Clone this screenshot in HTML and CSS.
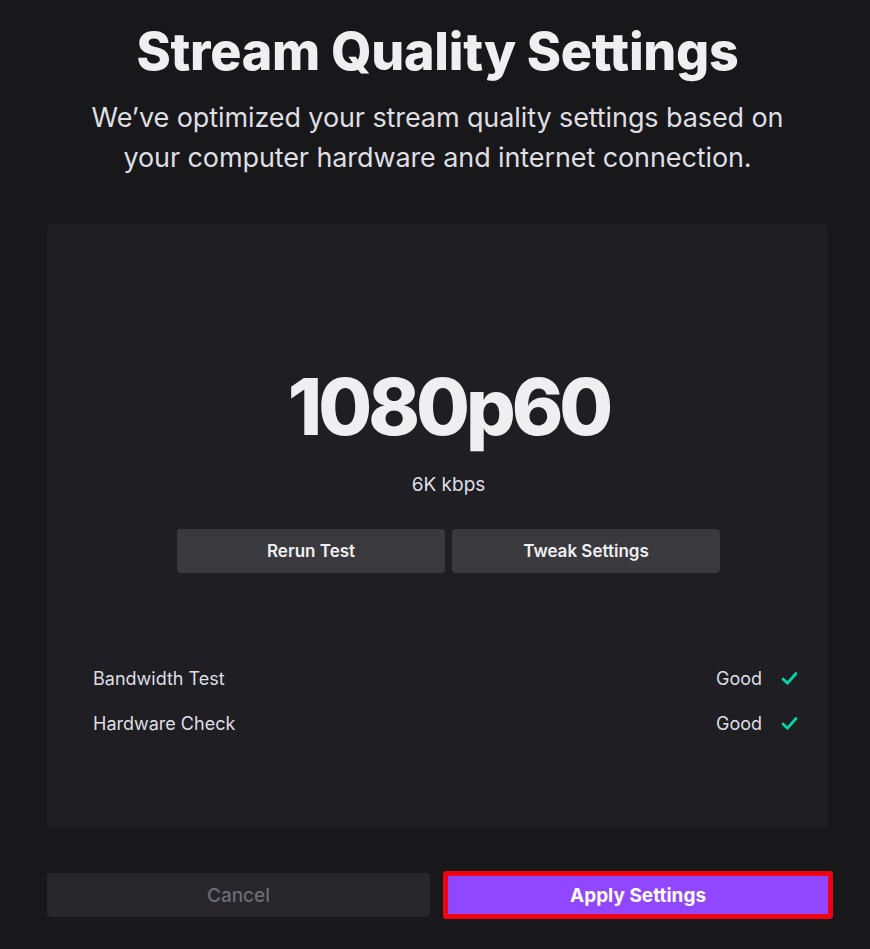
FILE: index.html
```html
<!DOCTYPE html>
<html lang="en">
<head>
<meta charset="utf-8">
<title>Stream Quality Settings</title>
<link rel="stylesheet" href="styles.css">
</head>
<body>
<main class="page">
  <header class="intro">
    <h1 class="title">Stream Quality Settings</h1>
    <p class="subtitle">We’ve optimized your stream quality settings based on your computer hardware and internet connection.</p>
  </header>
  <section class="card">
    <div class="result">
      <div class="resolution">1080p60</div>
      <div class="bitrate">6K kbps</div>
      <div class="actions">
        <button class="btn btn-secondary">Rerun Test</button>
        <button class="btn btn-secondary">Tweak Settings</button>
      </div>
    </div>
    <ul class="checks">
      <li class="check-row">
        <span class="check-label">Bandwidth Test</span>
        <span class="check-status">Good
          <svg class="check-icon" viewBox="0 0 17 15" width="17" height="15" aria-hidden="true"><path d="M2 8 L6.5 12.2 L15 2.5" fill="none" stroke="#00d5a9" stroke-width="2.8" stroke-linecap="round" stroke-linejoin="round"/></svg>
        </span>
      </li>
      <li class="check-row">
        <span class="check-label">Hardware Check</span>
        <span class="check-status">Good
          <svg class="check-icon" viewBox="0 0 17 15" width="17" height="15" aria-hidden="true"><path d="M2 8 L6.5 12.2 L15 2.5" fill="none" stroke="#00d5a9" stroke-width="2.8" stroke-linecap="round" stroke-linejoin="round"/></svg>
        </span>
      </li>
    </ul>
  </section>
  <footer class="footer">
    <button class="btn btn-cancel">Cancel</button>
    <div class="highlight">
      <button class="btn btn-primary">Apply Settings</button>
    </div>
  </footer>
</main>
</body>
</html>
```

FILE: styles.css
```css
* { box-sizing: border-box; }
html, body {
  margin: 0;
  padding: 0;
  background: #18181b;
  color: #efeff1;
  font-family: Inter, "Noto Sans", "Liberation Sans", sans-serif;
}
.page {
  width: 870px;
  height: 949px;
  padding: 22px 42px 0 47px;
  display: flex;
  flex-direction: column;
}
.intro {
  text-align: center;
}
.title {
  margin: 0;
  font-size: 52px;
  font-weight: 800;
  line-height: 60px;
  letter-spacing: -0.3px;
  color: #efeff1;
}
.subtitle {
  margin: 16px auto 0;
  width: 720px;
  font-size: 27px;
  line-height: 40px;
  font-weight: 400;
  letter-spacing: -0.1px;
  color: #dedee3;
}
.card {
  margin-top: 46px;
  width: 781px;
  height: 604px;
  background: #1f1f23;
  border-radius: 4px;
  display: flex;
  flex-direction: column;
  padding: 0 30px 0 46px;
}
.result {
  display: flex;
  flex-direction: column;
  align-items: center;
  padding-top: 138px;
  margin-right: -6px;
}
.resolution {
  font-size: 78px;
  font-weight: 800;
  line-height: 90px;
  letter-spacing: -4px;
  color: #efeff1;
}
.bitrate {
  margin-top: 21px;
  font-size: 19px;
  line-height: 24px;
  color: #dedee3;
}
.actions {
  margin-top: 32px;
  display: flex;
  gap: 7px;
}
.btn {
  border: none;
  font-family: inherit;
  cursor: pointer;
  border-radius: 4px;
}
.btn-secondary {
  width: 268px;
  height: 44px;
  background: #3a3a3e;
  color: #efeff1;
  font-size: 17px;
  font-weight: 600;
}
.checks {
  list-style: none;
  margin: 93px 0 0;
  padding: 0;
  display: flex;
  flex-direction: column;
  gap: 20px;
}
.check-row {
  display: flex;
  justify-content: space-between;
  align-items: center;
  height: 25px;
  font-size: 18px;
  color: #dedee3;
}
.check-status {
  display: flex;
  align-items: center;
  gap: 19px;
}
.check-icon {
  display: block;
}
.footer {
  margin-top: 43px;
  width: 781px;
  display: flex;
  gap: 16px;
  align-items: center;
}
.btn-cancel {
  width: 383px;
  height: 44px;
  background: #26262b;
  color: #6c6c72;
  font-size: 19px;
  font-weight: 500;
}
.highlight {
  flex: 1;
  margin-left: -3px;
  margin-right: -5px;
  border: 5px solid #f00010;
  border-radius: 3px;
  display: flex;
}
.btn-primary {
  flex: 1;
  height: 38px;
  background: #9147ff;
  color: #ffffff;
  font-size: 19px;
  font-weight: 700;
  border-radius: 0;
}
```
